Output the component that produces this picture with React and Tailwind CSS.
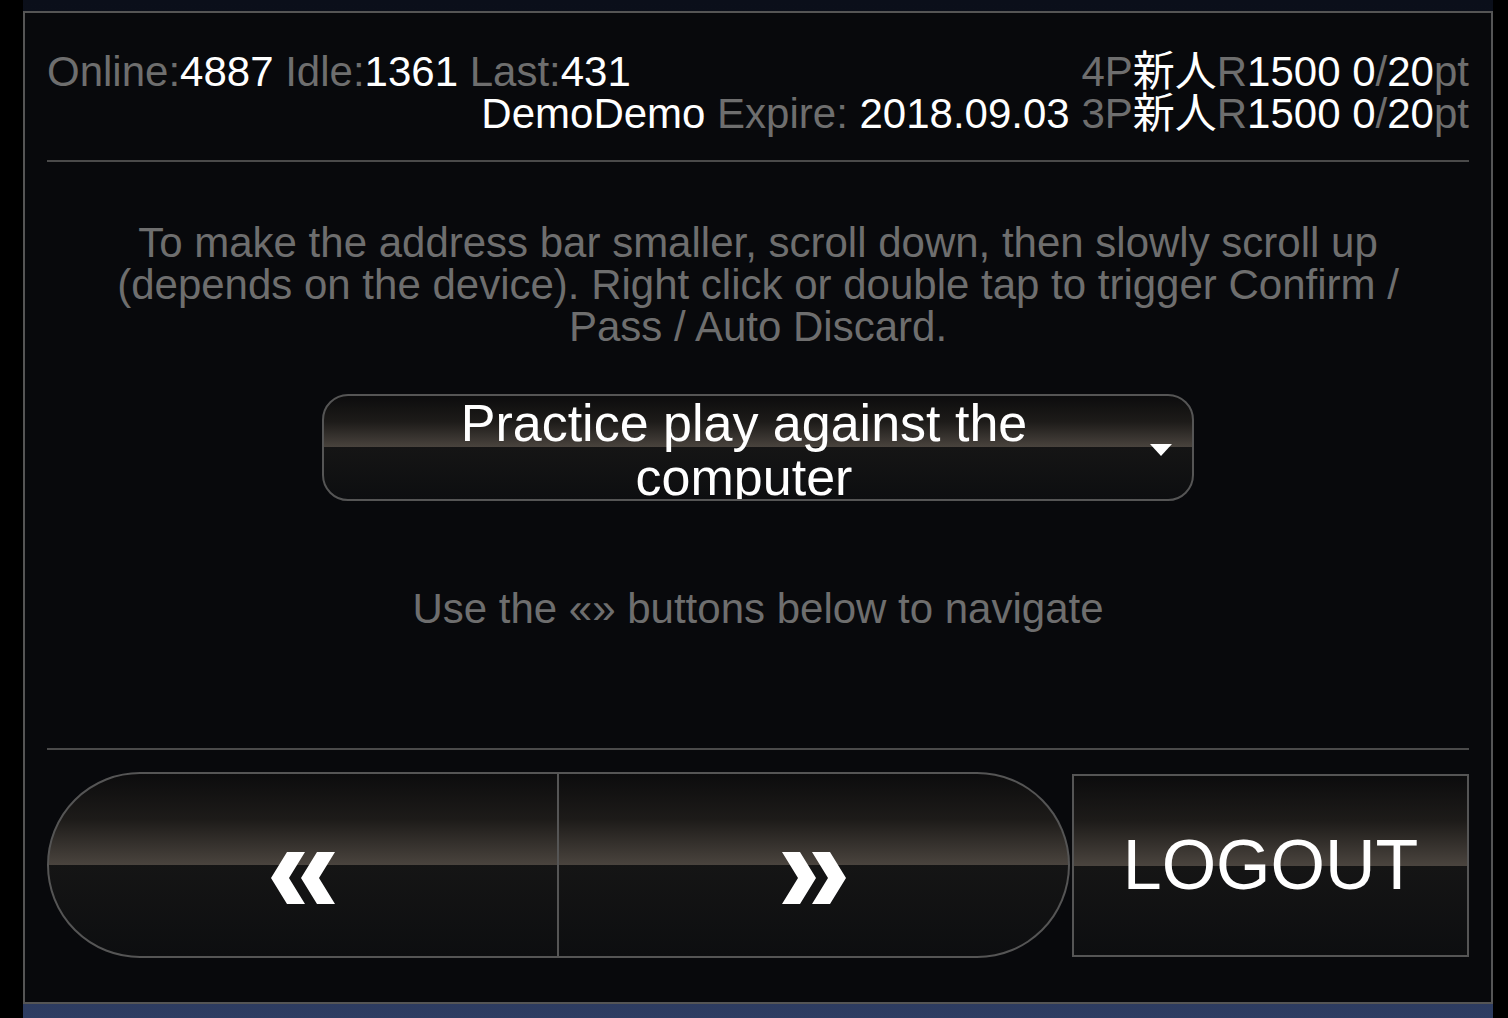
const gloss =
  'bg-[linear-gradient(to_bottom,#0c0c0d_0%,#1d1b19_25%,#4a443e_50%,#151515_50%,#0d0e10_100%)]';

function Chevrons({ dir, className }) {
  const left = (
    <>
      <polygon points="16,0 34,0 18,26 34,52 16,52 0,26" />
      <polygon points="46,0 64,0 48,26 64,52 46,52 30,26" />
    </>
  );
  return (
    <svg className={className} viewBox="0 0 64 52" fill="currentColor">
      {dir === 'left' ? left : <g transform="translate(64,0) scale(-1,1)">{left}</g>}
    </svg>
  );
}

function Gray({ children }) {
  return <span className="text-[#6e6e6e]">{children}</span>;
}

export default function App() {
  return (
    <div className="w-[1508px] h-[1018px] bg-black flex overflow-hidden font-['Liberation_Sans','Noto_Sans_CJK_JP',sans-serif]">
      <div className="ml-[23px] w-[1470px] h-full pt-[11px] bg-[linear-gradient(to_bottom,#0b0f1a_0%,#111829_60%,#2e3d62_100%)]">
        <div className="h-[993px] border-2 border-[#555555] bg-[#08090c] px-[22px] pt-[38px] flex flex-col">
          {/* header stats */}
          <div className="text-[42px] leading-[42px] text-white">
            <div className="flex justify-between whitespace-nowrap">
              <div>
                <Gray>Online:</Gray>4887 <Gray>Idle:</Gray>1361 <Gray>Last:</Gray>431
              </div>
              <div>
                <Gray>4P</Gray>新人<Gray>R</Gray>1500 0<Gray>/</Gray>20<Gray>pt</Gray>
              </div>
            </div>
            <div className="text-right whitespace-nowrap">
              DemoDemo <Gray>Expire:</Gray> 2018.09.03 <Gray>3P</Gray>新人<Gray>R</Gray>1500 0<Gray>/</Gray>20
              <Gray>pt</Gray>
            </div>
          </div>

          <div className="mt-[25px] border-t-2 border-[#4a4a4a]" />

          <p className="mt-[60px] px-[60px] text-center text-[42px] leading-[42px] text-[#6e6e6e]">
            To make the address bar smaller, scroll down, then slowly scroll up (depends on the device). Right click or
            double tap to trigger Confirm / Pass / Auto Discard.
          </p>

          {/* game mode select */}
          <div
            className={`relative mt-[46px] mx-auto w-[872px] h-[107px] rounded-[26px] border-2 border-[#555555] overflow-hidden ${gloss}`}
          >
            <div className="pl-[106px] pr-[134px] text-center text-white text-[52px] leading-[54px]">
              Practice play against the computer
            </div>
            <svg className="absolute right-[20px] top-[48px] w-[22px] h-[12px]" viewBox="0 0 22 12" fill="white">
              <polygon points="0,0 22,0 11,12" />
            </svg>
          </div>

          <p className="mt-[87px] text-center text-[42px] leading-[42px] text-[#6e6e6e]">
            Use the «» buttons below to navigate
          </p>

          <div className="mt-[118px] border-t-2 border-[#4a4a4a]" />

          {/* nav buttons */}
          <div className="mt-[22px] flex items-center gap-[2px]">
            <div className="flex w-[1023px] h-[186px]">
              <button
                className={`w-[512px] h-full rounded-l-[93px] border-2 border-[#555555] flex items-center justify-center text-white ${gloss}`}
              >
                <Chevrons dir="left" className="w-[64px] h-[52px] mt-[26px]" />
              </button>
              <button
                className={`w-[511px] h-full rounded-r-[93px] border-2 border-l-0 border-[#555555] flex items-center justify-center text-white ${gloss}`}
              >
                <Chevrons dir="right" className="w-[64px] h-[52px] mt-[26px]" />
              </button>
            </div>
            <button
              className={`flex-1 h-[183px] border-2 border-[#555555] flex items-center justify-center text-white text-[70px] leading-none ${gloss}`}
            >
              LOGOUT
            </button>
          </div>
        </div>
      </div>
    </div>
  );
}
